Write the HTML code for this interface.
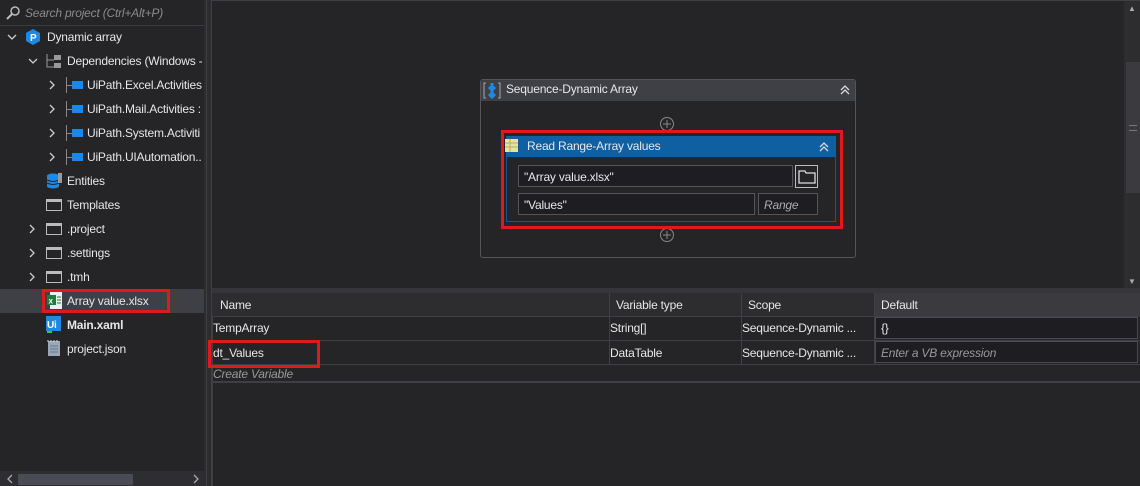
<!DOCTYPE html><html><head><style>
*{margin:0;padding:0;box-sizing:border-box}
body{width:1140px;height:486px;background:#252528;font-family:"Liberation Sans",sans-serif;font-size:12px;letter-spacing:-0.2px;color:#e6e6e6;position:relative;overflow:hidden}
.a{position:absolute}
.t{position:absolute;white-space:nowrap}
.fold{position:absolute;width:16px;height:12px;border:1.5px solid #bbb;border-top-width:3px}
.pk{position:absolute;width:11px;height:8px;background:#1e88e5}
.vl{position:absolute;width:1px;height:16px;background:#888}
.hl{position:absolute;width:6px;height:1px;background:#888}
</style></head><body>
<svg width="0" height="0" style="position:absolute"><defs>
<symbol id="r" viewBox="0 0 10 10"><path d="M3 1L7 5L3 9" stroke="#ccc" stroke-width="1.3" fill="none"/></symbol>
<symbol id="d" viewBox="0 0 10 10"><path d="M1 3L5 7L9 3" stroke="#ccc" stroke-width="1.3" fill="none"/></symbol>
<symbol id="u2" viewBox="0 0 12 12"><path d="M2 6L6 2L10 6M2 10L6 6L10 10" stroke="#ddd" stroke-width="1.3" fill="none"/></symbol>
</defs></svg>
<!-- left panel -->
<div class="a" style="left:0;top:25px;width:204px;height:1px;background:#3c3c40"></div>
<svg class="a" style="left:6px;top:6px" width="14" height="14"><circle cx="9" cy="5" r="4" fill="none" stroke="#bbb" stroke-width="1.5"/><line x1="6" y1="8" x2="1" y2="13" stroke="#bbb" stroke-width="2"/></svg>
<div class="t" style="left:25px;top:6px;color:#8a8a8a;font-style:italic">Search project (Ctrl+Alt+P)</div>
<svg class="a" style="left:7px;top:32px" width="10" height="10"><use href="#d"/></svg>
<svg class="a" style="left:26px;top:29px" width="14" height="16"><path d="M7 0L14 4V12L7 16L0 12V4Z" fill="#1e88e5"/><text x="4" y="12" font-size="10" font-weight="bold" fill="#fff" font-family="Liberation Sans">P</text></svg>
<div class="t" style="left:47px;top:30px">Dynamic array</div>
<svg class="a" style="left:28px;top:56px" width="10" height="10"><use href="#d"/></svg>
<svg class="a" style="left:46px;top:53px" width="16" height="16"><path d="M1 1V14H8M1 7H8" stroke="#999" fill="none"/><rect x="8" y="2" width="7" height="5" fill="#999"/><rect x="8" y="10" width="7" height="5" fill="#999"/></svg>
<div class="t" style="left:67px;top:54px">Dependencies (Windows -</div>
<svg class="a" style="left:47px;top:80px" width="10" height="10"><use href="#r"/></svg><div class="vl" style="left:66px;top:77px"></div><div class="hl" style="left:67px;top:85px"></div><div class="pk" style="left:72px;top:81px"></div><div class="t" style="left:87px;top:78px">UiPath.Excel.Activities</div>
<svg class="a" style="left:47px;top:104px" width="10" height="10"><use href="#r"/></svg><div class="vl" style="left:66px;top:101px"></div><div class="hl" style="left:67px;top:109px"></div><div class="pk" style="left:72px;top:105px"></div><div class="t" style="left:87px;top:102px">UiPath.Mail.Activities :</div>
<svg class="a" style="left:47px;top:128px" width="10" height="10"><use href="#r"/></svg><div class="vl" style="left:66px;top:125px"></div><div class="hl" style="left:67px;top:133px"></div><div class="pk" style="left:72px;top:129px"></div><div class="t" style="left:87px;top:126px">UiPath.System.Activiti</div>
<svg class="a" style="left:47px;top:152px" width="10" height="10"><use href="#r"/></svg><div class="vl" style="left:66px;top:149px"></div><div class="hl" style="left:67px;top:157px"></div><div class="pk" style="left:72px;top:153px"></div><div class="t" style="left:87px;top:150px">UiPath.UIAutomation..</div>
<div class="a" style="left:204px;top:70px;width:8px;height:100px;background:#2d2d30"></div>
<svg class="a" style="left:46px;top:172px" width="16" height="18"><ellipse cx="7" cy="4" rx="6" ry="2.5" fill="#1e88e5"/><rect x="1" y="4" width="12" height="10" fill="#1e88e5"/><ellipse cx="7" cy="14" rx="6" ry="2.5" fill="#1e88e5"/><path d="M1 8Q7 11 13 8M1 11Q7 14 13 11" stroke="#252528" fill="none"/><rect x="12" y="1" width="4" height="10" fill="#999"/></svg>
<div class="t" style="left:67px;top:174px">Entities</div>
<div class="fold" style="left:46px;top:199px"></div><div class="t" style="left:67px;top:198px">Templates</div>
<svg class="a" style="left:27px;top:224px" width="10" height="10"><use href="#r"/></svg><div class="fold" style="left:46px;top:223px"></div><div class="t" style="left:67px;top:222px">.project</div>
<svg class="a" style="left:27px;top:248px" width="10" height="10"><use href="#r"/></svg><div class="fold" style="left:46px;top:247px"></div><div class="t" style="left:67px;top:246px">.settings</div>
<svg class="a" style="left:27px;top:272px" width="10" height="10"><use href="#r"/></svg><div class="fold" style="left:46px;top:271px"></div><div class="t" style="left:67px;top:270px">.tmh</div>
<div class="a" style="left:0;top:289px;width:204px;height:24px;background:#3f3f46"></div>
<div class="a" style="left:42px;top:289px;width:128px;height:24px;border:3px solid #e0191f"></div>
<svg class="a" style="left:47px;top:292px" width="16" height="17"><rect x="3" y="0" width="12" height="17" fill="#eee"/><rect x="0" y="3" width="9" height="10" fill="#1d7d3c"/><text x="1.5" y="11.5" font-size="8" font-weight="bold" fill="#fff" font-family="Liberation Sans">x</text><path d="M10 5H14M10 8H14M10 11H14" stroke="#1d7d3c"/></svg>
<div class="t" style="left:67px;top:294px">Array value.xlsx</div>
<svg class="a" style="left:46px;top:316px" width="16" height="18"><rect x="0" y="0" width="15" height="15" fill="#1e88e5"/><text x="1" y="12" font-size="10" font-weight="bold" fill="#fff" font-family="Liberation Sans">Ui</text><path d="M1 16H6" stroke="#3c3" stroke-width="2"/></svg>
<div class="t" style="left:67px;top:318px;font-weight:bold">Main.xaml</div>
<svg class="a" style="left:47px;top:340px" width="14" height="17"><rect x="1" y="1" width="12" height="15" fill="#9aa7b8"/><path d="M1 0V2M4 0V2M7 0V2M10 0V2" stroke="#ddd"/><path d="M3 6H11M3 9H11M3 12H11" stroke="#6a7584"/></svg>
<div class="t" style="left:67px;top:342px">project.json</div>
<!-- horizontal scroll -->
<div class="a" style="left:0;top:471px;width:204px;height:15px;background:#2d2d32"></div>
<div class="a" style="left:18px;top:474px;width:115px;height:11px;background:#4a4b55"></div>
<svg class="a" style="left:6px;top:474px" width="8" height="10"><path d="M6 1L2 5L6 9" stroke="#aaa" fill="none" stroke-width="1.3"/></svg>
<svg class="a" style="left:192px;top:474px" width="8" height="10"><path d="M2 1L6 5L2 9" stroke="#aaa" fill="none" stroke-width="1.3"/></svg>
<!-- divider -->
<div class="a" style="left:204px;top:0;width:8px;height:486px;background:#2d2d30"></div>
<div class="a" style="left:206px;top:0;width:1px;height:486px;background:#3f3f46"></div>
<div class="a" style="left:211px;top:0;width:1px;height:486px;background:#3f3f46"></div>
<div class="a" style="left:212px;top:0;width:928px;height:1px;background:#3f3f46"></div>
<!-- right scrollbar -->
<div class="a" style="left:1124px;top:1px;width:16px;height:288px;background:#2d2d30"></div>
<div class="a" style="left:1126px;top:62px;width:14px;height:131px;background:#3a3a3f"></div>
<div class="a" style="left:1129px;top:125px;width:8px;height:6px;border-top:1px solid #777;border-bottom:1px solid #777"></div>
<div class="t" style="left:1128px;top:4px;color:#aaa;font-size:8px">&#9650;</div>
<div class="t" style="left:1128px;top:277px;color:#aaa;font-size:8px">&#9660;</div>
<div class="a" style="left:212px;top:288px;width:928px;height:5px;background:#35353a"></div>
<!-- sequence -->
<div class="a" style="left:480px;top:79px;width:376px;height:179px;border:1px solid #555;border-radius:3px;background:#252528"></div>
<div class="a" style="left:481px;top:80px;width:374px;height:21px;background:#3f3f46"></div>
<svg class="a" style="left:483px;top:82px" width="18" height="17"><path d="M3 1H1V16H3M15 1H17V16H15" stroke="#aaa" fill="none"/><path d="M9 1V8M6 5L9 8L12 5M9 9V16M6 12L9 15L12 12" stroke="#1e88e5" stroke-width="3" fill="none"/></svg>
<div class="t" style="left:506px;top:82px">Sequence-Dynamic Array</div>
<svg class="a" style="left:839px;top:84px" width="12" height="12"><use href="#u2"/></svg>
<svg class="a" style="left:659px;top:116px" width="16" height="16"><circle cx="8" cy="8" r="6.5" stroke="#888" fill="none"/><path d="M8 4V12M4 8H12" stroke="#888"/></svg>
<svg class="a" style="left:659px;top:227px" width="16" height="16"><circle cx="8" cy="8" r="6.5" stroke="#888" fill="none"/><path d="M8 4V12M4 8H12" stroke="#888"/></svg>
<div class="a" style="left:506px;top:136px;width:330px;height:86px;background:#252528;border:1px solid #0d5a99"></div>
<div class="a" style="left:506px;top:136px;width:330px;height:21px;background:#0f5fa3"></div>
<svg class="a" style="left:505px;top:139px" width="14" height="14"><rect x="0" y="0" width="13" height="13" fill="#e8e2a0"/><path d="M0 4H13M0 8H13M5 0V13" stroke="#b5ad60"/></svg>
<div class="t" style="left:527px;top:139px">Read Range-Array values</div>
<svg class="a" style="left:818px;top:141px" width="12" height="12"><use href="#u2"/></svg>
<div class="a" style="left:518px;top:165px;width:275px;height:22px;border:1px solid #555;background:#1e1e22"></div>
<div class="t" style="left:524px;top:170px">"Array value.xlsx"</div>
<div class="a" style="left:795px;top:165px;width:23px;height:23px;border:1px solid #bbb"></div>
<svg class="a" style="left:798px;top:169px" width="18" height="15"><path d="M1 2H7L8 4H17V14H1Z" stroke="#ddd" fill="none" stroke-width="1.3"/></svg>
<div class="a" style="left:518px;top:193px;width:237px;height:22px;border:1px solid #555;background:#1e1e22"></div>
<div class="t" style="left:524px;top:198px">"Values"</div>
<div class="a" style="left:758px;top:193px;width:60px;height:22px;border:1px solid #555;background:#1e1e22"></div>
<div class="t" style="left:764px;top:198px;font-style:italic;color:#aaa">Range</div>
<div class="a" style="left:501px;top:130px;width:342px;height:99px;border:3px solid #e0191f"></div>
<!-- variables -->
<div class="a" style="left:212px;top:293px;width:928px;height:193px;background:#252528;border-left:1px solid #3f3f46"></div>
<div class="a" style="left:212px;top:293px;width:928px;height:23px;background:#2d2d30"></div>
<div class="a" style="left:874px;top:293px;width:266px;height:23px;background:#3a3a3f"></div>
<div class="a" style="left:212px;top:316px;width:928px;height:1px;background:#3f3f46"></div>
<div class="a" style="left:212px;top:340px;width:928px;height:1px;background:#3f3f46"></div>
<div class="a" style="left:212px;top:364px;width:928px;height:1px;background:#3f3f46"></div>
<div class="a" style="left:212px;top:381px;width:928px;height:2px;background:#3f3f46"></div>
<div class="a" style="left:609px;top:293px;width:1px;height:71px;background:#3f3f46"></div>
<div class="a" style="left:741px;top:293px;width:1px;height:71px;background:#3f3f46"></div>
<div class="a" style="left:874px;top:293px;width:1px;height:71px;background:#3f3f46"></div>
<div class="t" style="left:220px;top:298px">Name</div>
<div class="t" style="left:616px;top:298px">Variable type</div>
<div class="t" style="left:748px;top:298px">Scope</div>
<div class="t" style="left:881px;top:298px">Default</div>
<div class="t" style="left:213px;top:321px">TempArray</div>
<div class="t" style="left:610px;top:321px">String[]</div>
<div class="t" style="left:742px;top:321px">Sequence-Dynamic ...</div>
<div class="a" style="left:875px;top:317px;width:263px;height:22px;border:1px solid #4a4a50;background:#1e1e22"></div>
<div class="t" style="left:881px;top:321px">{}</div>
<div class="t" style="left:213px;top:346px">dt_Values</div>
<div class="t" style="left:610px;top:346px">DataTable</div>
<div class="t" style="left:742px;top:346px">Sequence-Dynamic ...</div>
<div class="a" style="left:875px;top:341px;width:263px;height:22px;border:1px solid #4a4a50;background:#1e1e22"></div>
<div class="t" style="left:881px;top:346px;font-style:italic;color:#999">Enter a VB expression</div>
<div class="t" style="left:213px;top:367px;font-style:italic;color:#999">Create Variable</div>
<div class="a" style="left:208px;top:340px;width:112px;height:28px;border:3px solid #e0191f"></div>
</body></html>
